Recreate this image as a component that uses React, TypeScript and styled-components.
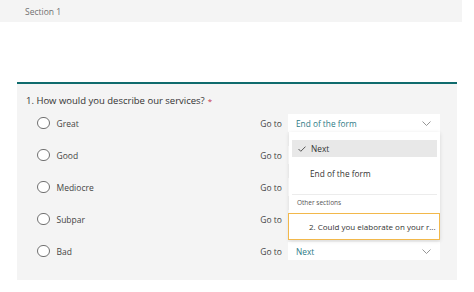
import React from 'react';
import styled, { createGlobalStyle } from 'styled-components';

const GlobalStyle = createGlobalStyle`
  html, body {
    margin: 0;
    padding: 0;
    background: #ffffff;
    font-family: "Open Sans", "Noto Sans", sans-serif;
    color: #333333;
  }
`;

const Page = styled.div`
  width: 474px;
  height: 292px;
  overflow: hidden;
`;

const SectionBar = styled.div`
  width: 462px;
  height: 22px;
  background: #f4f4f4;
  display: flex;
  align-items: center;
  padding-left: 25px;
  box-sizing: border-box;
  font-size: 8.5px;
  color: #707070;
`;

const Card = styled.div`
  margin: 60px 0 0 17px;
  width: 440px;
  background: #f4f4f4;
  border-top: 2px solid #0f6b6d;
  padding-bottom: 13px;
`;

const Question = styled.div`
  padding: 10px 0 0 9px;
  height: 13px;
  line-height: 13px;
  font-size: 9.5px;
  color: #333333;
`;

const Required = styled.span`
  color: #c4314b;
  font-size: 8px;
  margin-left: 3px;
`;

const Row = styled.div`
  height: 32px;
  display: flex;
  align-items: center;
  padding: 0 17px 0 20px;
`;

const Radio = styled.span`
  width: 10.5px;
  height: 10.5px;
  border: 1.2px solid #707070;
  border-radius: 50%;
  background: #ffffff;
  flex: none;
`;

const Label = styled.span`
  margin-left: 7px;
  font-size: 8.5px;
  color: #444444;
`;

const GoTo = styled.span`
  margin-left: auto;
  font-size: 8.5px;
  color: #444444;
  margin-right: 6px;
`;

const SelectWrap = styled.div`
  position: relative;
  width: 152px;
`;

const Select = styled.div`
  height: 18px;
  background: #ffffff;
  display: flex;
  align-items: center;
  justify-content: space-between;
  padding: 0 9px 0 8px;
  box-sizing: border-box;
  font-size: 8.3px;
  color: #2d7a86;
`;

const Menu = styled.div`
  position: absolute;
  top: 18px;
  left: 1px;
  width: 151px;
  height: 108px;
  background: #ffffff;
  box-shadow: 0 1px 4px rgba(0, 0, 0, 0.12);
  box-sizing: border-box;
  padding-top: 8px;
  display: flex;
  flex-direction: column;
  z-index: 2;
`;

const MenuItem = styled.div<{ $selected?: boolean }>`
  height: 17px;
  margin: 0 3px 8px;
  display: flex;
  align-items: center;
  padding-left: ${p => (p.$selected ? '6px' : '18px')};
  background: ${p => (p.$selected ? '#e8e8e8' : 'transparent')};
  font-size: 8.3px;
  color: #333333;
`;

const Divider = styled.div`
  height: 1px;
  margin: 4px 3px 0;
  background: #ececec;
`;

const GroupTitle = styled.div`
  height: 16px;
  line-height: 16px;
  padding-left: 8px;
  font-size: 6.5px;
  color: #555555;
`;

const FocusItem = styled.div`
  margin-top: auto;
  margin-left: -1px;
  height: 27px;
  border: 1.5px solid #f2b84b;
  box-sizing: border-box;
  display: flex;
  align-items: center;
  padding: 0 2px 0 20px;
  font-size: 8px;
  color: #333333;
  white-space: nowrap;
`;

const Chevron = () => (
  <svg width="9" height="5" viewBox="0 0 9 5" fill="none">
    <path d="M0.5 0.5 L4.5 4.5 L8.5 0.5" stroke="#8a8a8a" strokeWidth="0.9" />
  </svg>
);

const Check = () => (
  <svg width="8" height="6" viewBox="0 0 8 6" fill="none" style={{ marginRight: 5 }}>
    <path d="M0.5 3 L2.8 5.3 L7.5 0.6" stroke="#444" strokeWidth="0.9" />
  </svg>
);

const options = ['Great', 'Good', 'Mediocre', 'Subpar', 'Bad'];

function App() {
  return (
    <Page>
      <GlobalStyle />
      <SectionBar>Section 1</SectionBar>
      <Card>
        <Question>
          1. How would you describe our services?<Required>*</Required>
        </Question>
        {options.map((opt, i) => (
          <Row key={opt}>
            <Radio />
            <Label>{opt}</Label>
            <GoTo>Go to</GoTo>
            <SelectWrap>
              <Select>
                <span>{i === 0 ? 'End of the form' : 'Next'}</span>
                <Chevron />
              </Select>
              {i === 0 && (
                <Menu>
                  <MenuItem $selected>
                    <Check />
                    Next
                  </MenuItem>
                  <MenuItem>End of the form</MenuItem>
                  <Divider />
                  <GroupTitle>Other sections</GroupTitle>
                  <FocusItem>2. Could you elaborate on your r...</FocusItem>
                </Menu>
              )}
            </SelectWrap>
          </Row>
        ))}
      </Card>
    </Page>
  );
}

export default App;
